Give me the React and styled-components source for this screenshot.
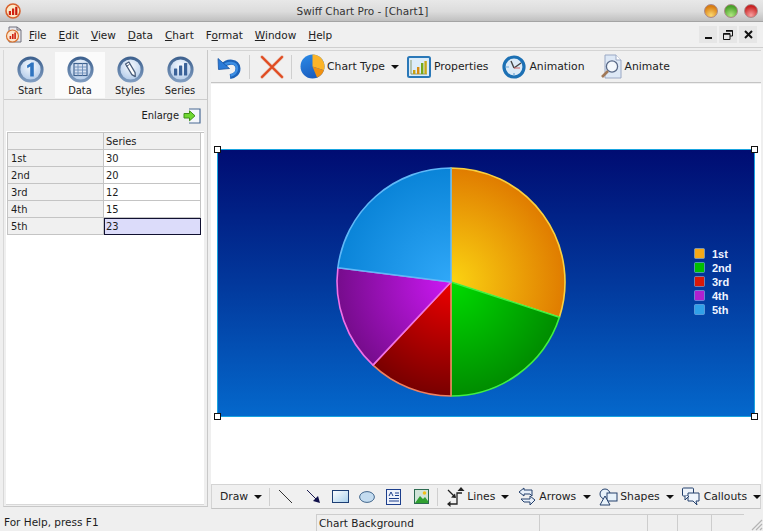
import React from "react";
import styled, { createGlobalStyle } from "styled-components";

const GlobalStyles = createGlobalStyle`
  html, body {
    margin: 0;
    padding: 0;
    height: 100%;
    background: #efefef;
    overflow: hidden;
  }
  #root {
    height: 100%;
  }
`;

const menus = [
  ["F", "ile"],
  ["E", "dit"],
  ["V", "iew"],
  ["D", "ata"],
  ["C", "hart"],
  ["F", "ormat", "o"],
  ["W", "indow"],
  ["H", "elp"],
];

const rows = [
  ["1st", "30"],
  ["2nd", "20"],
  ["3rd", "12"],
  ["4th", "15"],
  ["5th", "23"],
];

const slices = [
  { name: "1st", value: 30, id: "orange", inner: "#fbd412", outer: "#e07c00", edge: "#f8d040", swatch: "#f4a818" },
  { name: "2nd", value: 20, id: "green", inner: "#00dc00", outer: "#008c00", edge: "#40f040", swatch: "#00c000" },
  { name: "3rd", value: 12, id: "red", inner: "#ee0000", outer: "#780000", edge: "#f08060", swatch: "#d81808" },
  { name: "4th", value: 15, id: "purple", inner: "#cc18f4", outer: "#760c8c", edge: "#f070e8", swatch: "#b020d0" },
  { name: "5th", value: 23, id: "blue", inner: "#30a8f8", outer: "#0a84d8", edge: "#60b8f8", swatch: "#30a0e8" },
];

const CX = 233;
const CY = 132;
const R = 114;

function polar(pct) {
  const a = (pct / 100) * Math.PI * 2;
  return [CX + R * Math.sin(a), CY - R * Math.cos(a)];
}

const Logo = ({ size = 16 }) => (
  <svg width={size} height={size} viewBox="0 0 16 16">
    <circle cx="8" cy="8" r="7" fill="#fbe9c8" stroke="#d8602c" strokeWidth="1.6" />
    <rect x="3.8" y="8" width="2.2" height="4" fill="#d02010" />
    <rect x="7" y="5.5" width="2.2" height="6.5" fill="#d02010" />
    <rect x="10.2" y="3.8" width="2.2" height="8.2" fill="#c81808" />
  </svg>
);

const DocLogo = () => (
  <svg width="18" height="18" viewBox="0 0 18 18">
    <path d="M4 1h8l4 3v12H4z" fill="#e8e8ee" stroke="#70707c" />
    <path d="M12 1v3h4" fill="none" stroke="#70707c" />
    <circle cx="7.5" cy="10" r="6" fill="#fbe4cc" stroke="#d8702c" strokeWidth="1.2" />
    <rect x="4.6" y="10" width="1.6" height="3" fill="#d02010" />
    <rect x="7" y="8" width="1.6" height="5" fill="#d02010" />
    <rect x="9.3" y="6.5" width="1.6" height="6.5" fill="#d02010" />
  </svg>
);

const TabIcon = ({ children }) => (
  <svg width="27" height="27" viewBox="0 0 27 27">
    <defs>
      <radialGradient id="ringFill" cx="0.5" cy="0.35" r="0.7">
        <stop offset="0" stopColor="#f8fbff" />
        <stop offset="1" stopColor="#a9c4e6" />
      </radialGradient>
      <linearGradient id="ringEdge" x1="0" y1="0" x2="0" y2="1">
        <stop offset="0" stopColor="#3f628f" />
        <stop offset="1" stopColor="#7f9cc0" />
      </linearGradient>
    </defs>
    <circle cx="13.5" cy="13.5" r="11.6" fill="url(#ringFill)" stroke="url(#ringEdge)" strokeWidth="3" />
    {children}
  </svg>
);

const StartGlyph = () => (
  <TabIcon>
    <path d="M10 9.5l4.4-3h2.4v14h-3.6V10.6l-2.8 1.6z" fill="#2f74c0" />
  </TabIcon>
);

const DataGlyph = () => (
  <TabIcon>
    <rect x="7" y="7.5" width="13" height="12" fill="#d8e2f2" stroke="#3f628f" strokeWidth="1.2" />
    <path d="M7 11h13M7 14h13M7 17h13M11 7.5v12M15.5 7.5v12" stroke="#6b8cb8" strokeWidth="0.9" />
  </TabIcon>
);

const StylesGlyph = () => (
  <TabIcon>
    <path d="M8.5 8l3.4-2 6.2 10.6 .2 4 -3.4 -2z" fill="#fff" stroke="#4a5e7c" strokeWidth="1.3" strokeLinejoin="round" />
    <path d="M9 10.5l3.5-2" stroke="#4a5e7c" strokeWidth="1" />
  </TabIcon>
);

const SeriesGlyph = () => (
  <TabIcon>
    <rect x="7" y="12.5" width="3.2" height="7" rx="0.6" fill="#3a6299" />
    <rect x="12" y="9.5" width="3.2" height="10" rx="0.6" fill="#3a6299" />
    <rect x="17" y="7" width="3.2" height="12.5" rx="0.6" fill="#3a6299" />
  </TabIcon>
);

const EnlargeIcon = () => (
  <svg width="18" height="16" viewBox="0 0 18 16">
    <path d="M6 1h11v14H6" fill="#f4f6fa" stroke="#4a6a94" strokeWidth="1.2" />
    <path d="M1 5.5h5.5V2.8l5.5 5 -5.5 5v-2.8H1z" fill="#70d830" stroke="#3e8e18" />
  </svg>
);

const UndoIcon = () => (
  <svg width="24" height="24" viewBox="0 0 24 24">
    <path d="M6 11C10 5.5 21 5.5 21 13.5C21 18 17.5 21 13 21.5" fill="none" stroke="#1c62b8" strokeWidth="5" />
    <path d="M6 11C10 6.5 20 6.5 20 13.5C20 17 17 20 13.5 20.5" fill="none" stroke="#3c8ee4" strokeWidth="2.4" />
    <path d="M1 3.5L1.5 14.5L12.5 13.5z" fill="#2a7ad8" stroke="#1a54a0" strokeWidth="0.8" strokeLinejoin="round" />
  </svg>
);

const DeleteIcon = () => (
  <svg width="24" height="24" viewBox="0 0 24 24">
    <path d="M2 2l20 20M22 2L2 22" stroke="#e8c0b0" strokeWidth="3.4" strokeLinecap="round" />
    <path d="M2 2l20 20M22 2L2 22" stroke="#e04a20" strokeWidth="2.2" strokeLinecap="round" />
  </svg>
);

const PieIcon = () => (
  <svg width="25" height="25" viewBox="0 0 25 25">
    <defs>
      <linearGradient id="pieBlue" x1="0" y1="0" x2="0.4" y2="1">
        <stop offset="0" stopColor="#2c8ce8" />
        <stop offset="1" stopColor="#1a5ec0" />
      </linearGradient>
    </defs>
    <circle cx="12.5" cy="12.5" r="12" fill="url(#pieBlue)" />
    <path d="M12.5.5a12 12 0 0 1 11.4 15.8L12.5 12.5z" fill="#fbb428" />
    <path d="M12.5 12.5l11.4 3.8A12 12 0 0 1 17 23.6z" fill="#f09010" />
  </svg>
);

const PropsIcon = () => (
  <svg width="24" height="22" viewBox="0 0 24 22">
    <rect x="1" y="1" width="22" height="20" rx="1.5" fill="#dcecf8" stroke="#2a78b8" strokeWidth="2" />
    <path d="M4 4v14h16" fill="none" stroke="#8a9a6a" />
    <rect x="6" y="14" width="2.4" height="4" fill="#c8a010" />
    <rect x="10" y="11" width="2.4" height="7" fill="#d88c10" />
    <rect x="14" y="7" width="2.4" height="11" fill="#78a818" />
    <rect x="17.4" y="5" width="2.4" height="13" fill="#c8a818" />
  </svg>
);

const ClockIcon = () => (
  <svg width="24" height="24" viewBox="0 0 24 24">
    <circle cx="12" cy="12" r="10" fill="#dceaf6" stroke="#1c70b4" strokeWidth="3.2" />
    <path d="M12 13l7-5M12 13L9 6" stroke="#444" strokeWidth="1.4" />
    <path d="M12 13h6" stroke="#d06060" strokeWidth="1" />
    <path d="M4 12h3M12 18v2" stroke="#70a8d8" strokeWidth="1.2" />
  </svg>
);

const PreviewIcon = () => (
  <svg width="21" height="25" viewBox="0 0 21 25">
    <path d="M4 1h11l5 5v18H4z" fill="#dde8f6" stroke="#9aa8c4" />
    <path d="M15 1v5h5" fill="#fff" stroke="#9aa8c4" />
    <circle cx="11" cy="12.5" r="5.6" fill="#f4f8fc" stroke="#5a6a88" strokeWidth="1.3" />
    <path d="M7 17l-6 6" stroke="#a07858" strokeWidth="2.6" />
  </svg>
);

const LineIcon = () => (
  <svg width="15" height="15" viewBox="0 0 15 15">
    <path d="M1 1l13 13" stroke="#333" />
  </svg>
);

const ArrowLineIcon = () => (
  <svg width="15" height="15" viewBox="0 0 15 15">
    <path d="M1 1l9 9" stroke="#1a1a50" />
    <path d="M14 14l-7-2 5-5z" fill="#10104a" />
  </svg>
);

const RectIcon = () => (
  <svg width="17" height="13" viewBox="0 0 17 13">
    <defs>
      <linearGradient id="rectFill" x1="0" y1="0" x2="1" y2="1">
        <stop offset="0" stopColor="#ffffff" />
        <stop offset="1" stopColor="#a8d0ec" />
      </linearGradient>
    </defs>
    <rect x="0.5" y="0.5" width="16" height="12" fill="url(#rectFill)" stroke="#1c3e74" />
  </svg>
);

const EllipseIcon = () => (
  <svg width="16" height="12" viewBox="0 0 16 12">
    <ellipse cx="8" cy="6" rx="7.4" ry="5.4" fill="#c4dcf0" stroke="#42668c" />
  </svg>
);

const TextBoxIcon = () => (
  <svg width="15" height="16" viewBox="0 0 15 16">
    <rect x="0.5" y="0.5" width="14" height="15" fill="#eef2fb" stroke="#1c3e8c" />
    <path d="M3 7l2-4 2 4M9 4h4M9 6.5h4M3 9.5h10M3 12h10" stroke="#1c3e8c" strokeWidth="1" fill="none" />
  </svg>
);

const PictureIcon = () => (
  <svg width="15" height="15" viewBox="0 0 15 15">
    <rect x="0.5" y="0.5" width="14" height="14" fill="#d0e4d8" stroke="#2c6a50" />
    <circle cx="10.5" cy="4" r="1.8" fill="#f0c018" />
    <path d="M1 14l5-7 3 3 2-2 3 4v2z" fill="#30a030" />
  </svg>
);

const ConnectorIcon = () => (
  <svg width="20" height="20" viewBox="0 0 20 20">
    <path d="M2 3l7 7M3 17h8V6h5" fill="none" stroke="#222" strokeWidth="1.3" />
    <path d="M15 0l3.5 4h-7zM1 17l3.5-3v6zM10 11l-5 -.5 4-4z" fill="#222" />
  </svg>
);

const BlockArrowsIcon = () => (
  <svg width="18" height="19" viewBox="0 0 18 19">
    <path d="M6 1L1 5l5 4V7h6l2 2V3H6zM12 9l5 4-5 5v-3H6l-3-3h9z" fill="#e8f0fa" stroke="#24406c" strokeLinejoin="round" />
  </svg>
);

const ShapesIcon = () => (
  <svg width="19" height="18" viewBox="0 0 19 18">
    <circle cx="6" cy="6" r="5" fill="#e8f2fa" stroke="#24406c" />
    <rect x="8" y="5" width="10" height="8" fill="#e8f2fa" stroke="#24406c" />
    <path d="M6 8l5 9H1z" fill="#e8f2fa" stroke="#24406c" />
  </svg>
);

const CalloutIcon = () => (
  <svg width="18" height="19" viewBox="0 0 18 19">
    <rect x="0.5" y="1" width="11" height="8" rx="1" fill="#eef4fb" stroke="#24406c" />
    <path d="M6 6h11v8h-3l1 4-4-4H6z" fill="#eef4fb" stroke="#24406c" />
    <path d="M3 9v4l4-4" fill="#eef4fb" stroke="#24406c" />
  </svg>
);

const Chart = () => {
  let start = 0;
  const paths = slices.map((s) => {
    const [x0, y0] = polar(start);
    const [x1, y1] = polar(start + s.value);
    const large = s.value > 50 ? 1 : 0;
    const d = `M${CX} ${CY}L${x0} ${y0}A${R} ${R} 0 ${large} 1 ${x1} ${y1}Z`;
    start += s.value;
    return { ...s, d };
  });

  return (
    <svg width="536" height="266" viewBox="0 0 536 266">
      <defs>
        {slices.map((s) => (
          <radialGradient key={s.id} id={s.id} gradientUnits="userSpaceOnUse" cx={CX} cy={CY} r={R}>
            <stop offset="0" stopColor={s.inner} />
            <stop offset="1" stopColor={s.outer} />
          </radialGradient>
        ))}
      </defs>
      {paths.map((s) => (
        <path key={s.id} d={s.d} fill={`url(#${s.id})`} stroke={s.edge} strokeWidth="1.6" strokeLinejoin="round" />
      ))}
      {slices.map((s, i) => (
        <g key={s.name}>
          <rect x="476.5" y={98.5 + i * 14} width="10" height="10" rx="1" fill={s.swatch} stroke="#7fb4e8" strokeOpacity="0.6" />
          <text
            x="494"
            y={108 + i * 14}
            fill="#f0f4ff"
            fontFamily="'Liberation Sans', Arial, sans-serif"
            fontWeight="700"
            fontSize="11"
          >
            {s.name}
          </text>
        </g>
      ))}
    </svg>
  );
};

export default function App() {
  return (
    <>
      <GlobalStyles />
      <Win>
        <TitleBar>
          <TitleLogo>
            <Logo />
          </TitleLogo>
          <TitleText>Swiff Chart Pro - [Chart1]</TitleText>
          <Lights>
            <Light $from="#fbd870" $to="#d87c10" />
            <Light $from="#b0e880" $to="#48a028" />
            <Light $from="#f8a0a0" $to="#c82020" />
          </Lights>
        </TitleBar>

        <MenuBar>
          <DocLogo />
          <MenuList>
            {menus.map(([first, rest, under]) => (
              <MenuItem key={first + rest}>
                {under ? (
                  <>
                    {first}
                    <u>{rest[0]}</u>
                    {rest.slice(1)}
                  </>
                ) : (
                  <>
                    <u>{first}</u>
                    {rest}
                  </>
                )}
              </MenuItem>
            ))}
          </MenuList>
          <MdiButtons>
            <MdiButton>
              <svg width="9" height="9" viewBox="0 0 9 9">
                <rect x="1" y="7" width="7" height="2" fill="#111" />
              </svg>
            </MdiButton>
            <MdiButton>
              <svg width="10" height="10" viewBox="0 0 10 10">
                <path d="M3 .5h6.5v5.5H7M.5 3.5H7v6H.5z" fill="none" stroke="#111" />
                <path d="M3 1h6.5M.5 4H7" stroke="#111" strokeWidth="1.4" />
              </svg>
            </MdiButton>
            <MdiButton>
              <svg width="9" height="9" viewBox="0 0 9 9">
                <path d="M1 1l7 7M8 1L1 8" stroke="#111" strokeWidth="2" />
              </svg>
            </MdiButton>
          </MdiButtons>
        </MenuBar>

        <Body>
          <Side>
            <Tabs>
              <Tab>
                <StartGlyph />
                <span>Start</span>
              </Tab>
              <Tab $active>
                <DataGlyph />
                <span>Data</span>
              </Tab>
              <Tab>
                <StylesGlyph />
                <span>Styles</span>
              </Tab>
              <Tab>
                <SeriesGlyph />
                <span>Series</span>
              </Tab>
            </Tabs>
            <EnlargeRow>
              <span>Enlarge</span>
              <EnlargeIcon />
            </EnlargeRow>
            <SheetArea>
              <Sheet>
                <HeadCell />
                <ValueCell $head>Series</ValueCell>
                {rows.map(([label, value], i) => (
                  <React.Fragment key={label}>
                    <HeadCell>{label}</HeadCell>
                    <ValueCell $selected={i === rows.length - 1}>{value}</ValueCell>
                  </React.Fragment>
                ))}
              </Sheet>
            </SheetArea>
          </Side>

          <Main>
            <Toolbar>
              <ToolIcon $ml={6}>
                <UndoIcon />
              </ToolIcon>
              <Sep $mx={8} />
              <ToolIcon $ml={2}>
                <DeleteIcon />
              </ToolIcon>
              <Sep $mx={7} />
              <ToolIcon $ml={1}>
                <PieIcon />
              </ToolIcon>
              <ToolLabel $ml={2}>Chart Type</ToolLabel>
              <Caret $ml={6} />
              <ToolIcon $ml={8}>
                <PropsIcon />
              </ToolIcon>
              <ToolLabel $ml={3}>Properties</ToolLabel>
              <ToolIcon $ml={14}>
                <ClockIcon />
              </ToolIcon>
              <ToolLabel $ml={3}>Animation</ToolLabel>
              <ToolIcon $ml={16}>
                <PreviewIcon />
              </ToolIcon>
              <ToolLabel $ml={3}>Animate</ToolLabel>
            </Toolbar>

            <Canvas>
              <ChartFrame>
                <Chart />
                <Handle $x="left" $y="top" />
                <Handle $x="right" $y="top" />
                <Handle $x="left" $y="bottom" />
                <Handle $x="right" $y="bottom" />
              </ChartFrame>
            </Canvas>

            <DrawBar>
              <ToolLabel $ml={8}>Draw</ToolLabel>
              <Caret $ml={6} />
              <Sep $mx={7} $short />
              <ToolIcon $ml={1}>
                <LineIcon />
              </ToolIcon>
              <ToolIcon $ml={13}>
                <ArrowLineIcon />
              </ToolIcon>
              <ToolIcon $ml={11}>
                <RectIcon />
              </ToolIcon>
              <ToolIcon $ml={10}>
                <EllipseIcon />
              </ToolIcon>
              <ToolIcon $ml={11}>
                <TextBoxIcon />
              </ToolIcon>
              <ToolIcon $ml={13}>
                <PictureIcon />
              </ToolIcon>
              <Sep $mx={8} $short />
              <ToolIcon>
                <ConnectorIcon />
              </ToolIcon>
              <ToolLabel $ml={1}>Lines</ToolLabel>
              <Caret $ml={6} />
              <ToolIcon $ml={9}>
                <BlockArrowsIcon />
              </ToolIcon>
              <ToolLabel $ml={3}>Arrows</ToolLabel>
              <Caret $ml={7} />
              <ToolIcon $ml={8}>
                <ShapesIcon />
              </ToolIcon>
              <ToolLabel $ml={2}>Shapes</ToolLabel>
              <Caret $ml={6} />
              <ToolIcon $ml={8}>
                <CalloutIcon />
              </ToolIcon>
              <ToolLabel $ml={4}>Callouts</ToolLabel>
              <Caret $ml={6} />
            </DrawBar>
          </Main>
        </Body>

        <StatusBar>
          <StatusText>For Help, press F1</StatusText>
          <Pane $w={223}>Chart Background</Pane>
          <Pane $w={108} />
          <Pane $w={30} />
          <Pane $w={34} />
          <Pane $w={33} />
          <Grip>
            <svg width="14" height="14" viewBox="0 0 14 14">
              <path d="M13 3L3 13M13 7l-6 6M13 11l-2 2" stroke="#b4b4b4" strokeWidth="1.2" />
            </svg>
          </Grip>
        </StatusBar>
      </Win>
    </>
  );
}

const Win = styled.div`
  width: 763px;
  height: 531px;
  display: flex;
  flex-direction: column;
  background: #efefef;
  color: #1c1c1c;
  font-family: "DejaVu Sans", Verdana, sans-serif;
  font-size: 10.5px;
  overflow: hidden;
`;

const TitleBar = styled.div`
  height: 21px;
  flex: none;
  display: flex;
  align-items: center;
  background: linear-gradient(#e8e8e8 0%, #dcdcdc 55%, #c0c0c0 100%);
  border-bottom: 1px solid #a4a4a4;
`;

const TitleLogo = styled.div`
  display: flex;
  margin-left: 5px;
`;

const TitleText = styled.div`
  flex: 1;
  text-align: center;
  color: #333;
`;

const Lights = styled.div`
  display: flex;
  gap: 6px;
  margin-right: 5px;
`;

const Light = styled.div`
  width: 14px;
  height: 14px;
  border-radius: 50%;
  border: 1px solid #a88;
  box-sizing: border-box;
  background: radial-gradient(circle at 50% 85%, ${(p) => p.$from} 0%, ${(p) => p.$to} 75%);
`;

const MenuBar = styled.div`
  height: 25px;
  flex: none;
  display: flex;
  align-items: center;
  padding: 0 6px 0 5px;
  border-bottom: 1px solid #cfcfcf;
  background: #f0f0f0;
`;

const MenuList = styled.div`
  display: flex;
  gap: 12px;
  margin-left: 6px;
  flex: 1;
`;

const MenuItem = styled.span`
  color: #222;
`;

const MdiButtons = styled.div`
  display: flex;
  gap: 2px;
`;

const MdiButton = styled.div`
  width: 18px;
  height: 17px;
  display: flex;
  align-items: center;
  justify-content: center;
  background: #e6e6e6;
`;

const Body = styled.div`
  flex: 1;
  min-height: 0;
  display: flex;
`;

const Side = styled.div`
  width: 205px;
  box-sizing: border-box;
  flex: none;
  margin: 2px 0 2px 3px;
  display: flex;
  flex-direction: column;
  border-right: 1px solid #c8c8c8;
  border-left: 1px solid #d8d8d8;
  border-bottom: 1px solid #c8c8c8;
  font-stretch: condensed;
  font-size: 11px;
`;

const Tabs = styled.div`
  display: flex;
  height: 50px;
  box-sizing: border-box;
  flex: none;
  padding: 2px 0 1px 1px;
  border-bottom: 1px solid #cccccc;
`;

const Tab = styled.div`
  width: 50px;
  display: flex;
  flex-direction: column;
  align-items: center;
  padding-top: 4px;
  box-sizing: border-box;
  background: ${(p) => (p.$active ? "#fbfbfb" : "transparent")};
  color: #222;

  span {
    margin-top: 1px;
    line-height: 13px;
  }
`;

const EnlargeRow = styled.div`
  height: 31px;
  flex: none;
  display: flex;
  align-items: center;
  justify-content: flex-end;
  gap: 4px;
  padding-right: 6px;
`;

const SheetArea = styled.div`
  flex: 1;
  margin: 0 3px 1px 2px;
  padding: 1px 0 0 1px;
  background: #ffffff;
  border-bottom: 1px solid #d8d8d8;
`;

const Sheet = styled.div`
  display: grid;
  grid-template-columns: 96px 97px;
  grid-auto-rows: 17px;
  border-top: 1px solid #c4c4c4;
  border-left: 1px solid #c4c4c4;
`;

const HeadCell = styled.div`
  background: #f0f0f0;
  border-right: 1px solid #c4c4c4;
  border-bottom: 1px solid #c4c4c4;
  padding-left: 3px;
  line-height: 17px;
  min-width: 0;
`;

const ValueCell = styled.div`
  background: ${(p) => (p.$selected ? "#dcdcfa" : p.$head ? "#f0f0f0" : "#ffffff")};
  border-right: ${(p) => (p.$selected ? "1px solid #101030" : "1px solid #c4c4c4")};
  border-bottom: ${(p) => (p.$selected ? "1px solid #101030" : "1px solid #c4c4c4")};
  outline: ${(p) => (p.$selected ? "1px solid #101030" : "none")};
  outline-offset: -1px;
  padding-left: 2px;
  line-height: 17px;
`;

const Main = styled.div`
  flex: 1;
  min-width: 0;
  margin: 2px 2px 0 3px;
  display: flex;
  flex-direction: column;
`;

const Toolbar = styled.div`
  height: 33px;
  box-sizing: border-box;
  flex: none;
  display: flex;
  align-items: center;
  background: #f0f0f0;
  border-top: 1px solid #d4d4d4;
  border-bottom: 1px solid #c4c4c4;
  margin-bottom: 1px;
  font-size: 10.8px;
`;

const DrawBar = styled(Toolbar)`
  height: 25px;
  margin: 0;
  border-left: 1px solid #d4d4d4;
  border-right: 1px solid #d4d4d4;
`;

const ToolIcon = styled.div`
  display: flex;
  flex: none;
  margin-left: ${(p) => p.$ml || 0}px;
`;

const ToolLabel = styled.span`
  flex: none;
  margin-left: ${(p) => p.$ml || 0}px;
  color: #222;
`;

const Sep = styled.div`
  width: 1px;
  height: ${(p) => (p.$short ? 18 : 24)}px;
  flex: none;
  background: #cfcfcf;
  margin: 0 ${(p) => p.$mx}px;
`;

const Caret = styled.div`
  width: 0;
  height: 0;
  flex: none;
  margin-left: ${(p) => p.$ml || 0}px;
  border-left: 4px solid transparent;
  border-right: 4px solid transparent;
  border-top: 4px solid #111;
`;

const Canvas = styled.div`
  flex: 1;
  min-height: 0;
  background: #ffffff;
  padding: 65px 6px 0 6px;
`;

const ChartFrame = styled.div`
  position: relative;
  width: 536px;
  height: 266px;
  border: 1px solid #1aa4e0;
  background: linear-gradient(#000c72 0%, #02389c 50%, #0468cc 100%);

  svg {
    display: block;
  }
`;

const Handle = styled.div`
  position: absolute;
  width: 5px;
  height: 5px;
  background: #ffffff;
  border: 1px solid #111;
  ${(p) => p.$x}: -4px;
  ${(p) => p.$y}: -4px;
`;

const StatusBar = styled.div`
  height: 22px;
  flex: none;
  display: flex;
  align-items: flex-end;
  background: #efefef;
  box-sizing: border-box;
`;

const StatusText = styled.div`
  width: 316px;
  height: 17px;
  line-height: 17px;
  flex: none;
  padding-left: 4px;
  box-sizing: border-box;
`;

const Pane = styled.div`
  width: ${(p) => p.$w}px;
  height: 17px;
  line-height: 17px;
  flex: none;
  box-sizing: border-box;
  padding-left: 2px;
  border-top: 1px solid #cdcdcd;
  border-left: 1px solid #cdcdcd;
`;

const Grip = styled.div`
  flex: 1;
  display: flex;
  justify-content: flex-end;
  align-self: flex-end;
`;
